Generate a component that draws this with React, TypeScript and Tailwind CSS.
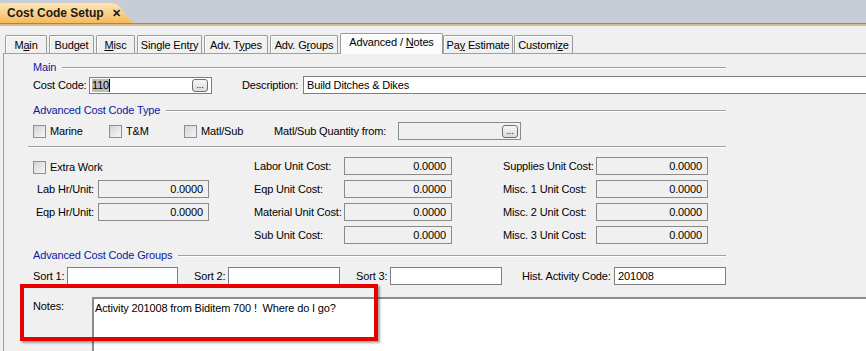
import React from 'react';

const tabs = [
    { label: <>M<u>a</u>in</>, cls: 'ml-[2px] w-[42px]' },
    { label: <>Bud<u>g</u>et</>, cls: 'ml-[2px] w-[45px]' },
    { label: <><u>M</u>isc</>, cls: 'ml-[2px] w-[39px]' },
    { label: <>Single Ent<u>r</u>y</>, cls: 'ml-[2px] w-[65px]' },
    { label: <>Adv. T<u>y</u>pes</>, cls: 'ml-[2px] w-[64px]' },
    { label: <>Adv. G<u>r</u>oups</>, cls: 'ml-[2px] w-[68px]' },
    { label: <>Advanced / <u>N</u>otes</>, cls: 'ml-[2px] w-[103px]', active: true },
    { label: <>Pa<u>y</u> Estimate</>, cls: 'w-[70px]' },
    { label: <>Customi<u>z</u>e</>, cls: 'ml-[1px] w-[59px]' },
];

const EllipsisButton = () => (
    <div className="shrink-0 w-[16px] h-[13px] rounded-[3px] border border-[#707070] bg-gradient-to-b from-[#f6f6f6] to-[#dadada] flex items-end justify-center leading-none text-[9px] pb-[1px]">
        ...
    </div>
);

const Checkbox = ({ label }: { label: string }) => (
    <div className="flex items-center gap-[4px]">
        <div className="shrink-0 w-[13px] h-[13px] border border-[#8f8f8f] bg-gradient-to-br from-[#d4d4d4] to-[#f6f6f6]" />
        <span className="whitespace-nowrap">{label}</span>
    </div>
);

const GroupHeader = ({ title }: { title: string }) => (
    <div className="flex items-center h-[13px] w-[722px] pl-[29px]">
        <span className="text-[#0a18a4] whitespace-nowrap">{title}</span>
        <div className="flex-1 ml-[6px] h-[2px] border-t border-[#a0a0a0] border-b border-b-white" />
    </div>
);

const Label = ({ w, text, right }: { w: string; text: string; right?: boolean }) => (
    <span className={`${w} shrink-0 whitespace-nowrap ${right ? 'text-right' : ''}`}>{text}</span>
);

const NumBox = ({ w }: { w: string }) => (
    <div className={`${w} shrink-0 h-[18px] border border-[#8a8a8a] bg-[#f0f0f0] flex items-center justify-end pr-[5px]`}>0.0000</div>
);

const TextBox = ({ w, value }: { w: string; value?: string }) => (
    <div className={`${w} shrink-0 h-[18px] border border-[#7f7f7f] bg-white flex items-center pl-[3px]`}>{value}</div>
);

export default function App() {
    return (
        <div className="relative w-[866px] h-[351px] overflow-hidden bg-[#f0f0f0] font-['Liberation_Sans',Arial,sans-serif] text-[11px] tracking-[-0.15px] text-black">
            {/* Window tab strip */}
            <div className="h-[23px] bg-[#c8ccd7] flex items-end">
                <div className="h-[20px] w-[133px] rounded-tl-[2px] bg-gradient-to-b from-[#fde6b4] to-[#f5b95a] [clip-path:polygon(0_0,112px_0,118px_2px,133px_100%,0_100%)] flex items-center pl-[7px] font-bold text-[12px] tracking-normal text-[#1a1a1a]">
                    <span>Cost Code Setup</span>
                    <span className="ml-[8px] text-[11px]">✕</span>
                </div>
            </div>
            <div className="h-[1px] bg-[#7f917f]" />
            <div className="h-[2px] bg-[#d8b98c]" />

            {/* Tabs */}
            <div className="mt-[7px] h-[20px] pl-[3px] flex items-end">
                {tabs.map((t, i) => (
                    <div
                        key={i}
                        className={`${t.cls} ${t.active ? 'h-[21px] -mb-[1px] bg-[#fbfbfb] z-10 pb-[3px]' : 'h-[18px] bg-[#f0f0f0] pt-[1px]'} border border-b-0 border-[#9a9a9a] rounded-t-[2px] flex items-center justify-center whitespace-nowrap shadow-[inset_1px_1px_0_#ffffff]`}
                    >
                        <span>{t.label}</span>
                    </div>
                ))}
            </div>

            {/* Panel */}
            <div className="ml-[3px] border-t border-l border-[#a0a0a0] h-[300px] pt-[7px]">
                <GroupHeader title="Main" />

                <div className="mt-[2px] h-[18px] flex items-center pl-[29px]">
                    <Label w="w-[56px]" text="Cost Code:" />
                    <div className="shrink-0 w-[123px] h-[17px] border border-[#7f7f7f] bg-white flex items-center pl-[2px] pr-[3px]">
                        <span className="bg-[#bcbcbc] leading-[13px]">110</span>
                        <span className="w-[1px] h-[13px] bg-black" />
                        <div className="flex-1" />
                        <EllipsisButton />
                    </div>
                    <div className="w-[30px] shrink-0" />
                    <Label w="w-[61px]" text="Description:" />
                    <div className="shrink-0 w-[600px] h-[18px] border border-[#7f7f7f] bg-white flex items-center pl-[3px]">Build Ditches &amp; Dikes</div>
                </div>

                <div className="mt-[10px]">
                    <GroupHeader title="Advanced Cost Code Type" />
                </div>

                <div className="mt-[5px] h-[18px] flex items-center pl-[29px]">
                    <div className="w-[76px] shrink-0"><Checkbox label="Marine" /></div>
                    <div className="w-[75px] shrink-0"><Checkbox label="T&M" /></div>
                    <div className="w-[90px] shrink-0"><Checkbox label="Matl/Sub" /></div>
                    <Label w="w-[124px]" text="Matl/Sub Quantity from:" />
                    <div className="shrink-0 w-[123px] h-[18px] border border-[#8a8a8a] bg-[#f0f0f0] flex items-center justify-end pr-[2px]">
                        <EllipsisButton />
                    </div>
                </div>

                <div className="mt-[6px] ml-[24px] w-[698px] h-[2px] border-t border-[#a0a0a0] border-b border-b-white" />

                <div className="mt-[9px] pl-[29px] flex">
                    <div className="w-[221px] shrink-0 flex flex-col gap-[5px]">
                        <div className="h-[18px] flex items-center pt-[2px]"><Checkbox label="Extra Work" /></div>
                        <div className="h-[18px] flex items-center">
                            <Label w="w-[61px]" text="Lab Hr/Unit:" right />
                            <div className="ml-[4px]"><NumBox w="w-[111px]" /></div>
                        </div>
                        <div className="h-[18px] flex items-center">
                            <Label w="w-[61px]" text="Eqp Hr/Unit:" right />
                            <div className="ml-[4px]"><NumBox w="w-[111px]" /></div>
                        </div>
                    </div>
                    <div className="w-[249px] shrink-0 flex flex-col gap-[5px]">
                        {['Labor Unit Cost:', 'Eqp Unit Cost:', 'Material Unit Cost:', 'Sub Unit Cost:'].map((l) => (
                            <div key={l} className="h-[18px] flex items-center">
                                <Label w="w-[90px]" text={l} />
                                <NumBox w="w-[108px]" />
                            </div>
                        ))}
                    </div>
                    <div className="flex flex-col gap-[5px]">
                        {['Supplies Unit Cost:', 'Misc. 1 Unit Cost:', 'Misc. 2 Unit Cost:', 'Misc. 3 Unit Cost:'].map((l) => (
                            <div key={l} className="h-[18px] flex items-center">
                                <Label w="w-[93px]" text={l} />
                                <NumBox w="w-[112px]" />
                            </div>
                        ))}
                    </div>
                </div>

                <div className="mt-[5px]">
                    <GroupHeader title="Advanced Cost Code Groups" />
                </div>

                <div className="mt-[5px] h-[18px] flex items-center pl-[29px]">
                    <Label w="w-[34px]" text="Sort 1:" />
                    <TextBox w="w-[111px]" />
                    <div className="w-[16px] shrink-0" />
                    <Label w="w-[34px]" text="Sort 2:" />
                    <TextBox w="w-[112px]" />
                    <div className="w-[16px] shrink-0" />
                    <Label w="w-[34px]" text="Sort 3:" />
                    <TextBox w="w-[112px]" />
                    <div className="w-[20px] shrink-0" />
                    <Label w="w-[92px]" text="Hist. Activity Code:" />
                    <TextBox w="w-[112px]" value="201008" />
                </div>

                <div className="mt-[12px] flex pl-[29px]">
                    <Label w="w-[59px] pt-[1px]" text="Notes:" />
                    <div className="flex-1 h-[60px] border-t-2 border-l-2 border-[#8c8c8c] bg-white pl-[1px] pt-[1px] whitespace-pre">
                        Activity 201008 from Biditem 700 !  Where do I go?
                    </div>
                </div>
            </div>

            {/* Annotation */}
            <div className="absolute left-[20px] top-[284px] w-[358px] h-[57px] border-[4px] border-[#e80000] shadow-[2px_2px_2px_rgba(0,0,0,0.35)]" />
        </div>
    );
}
